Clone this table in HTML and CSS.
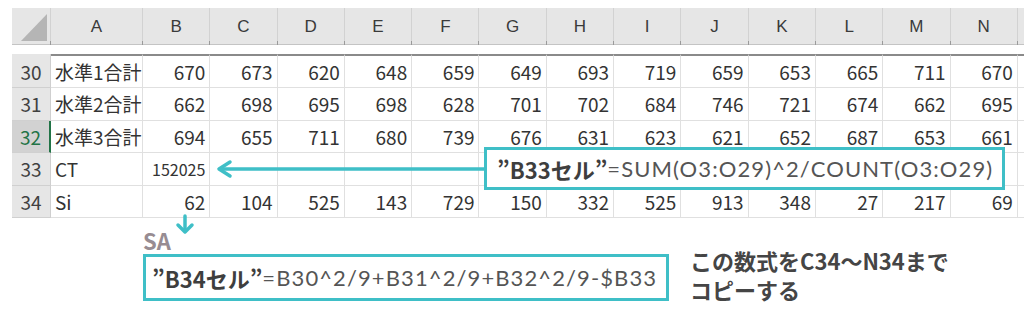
FILE: index.html
```html
<!DOCTYPE html>
<html lang="ja">
<head>
<meta charset="utf-8">
<title>Excel SA</title>
<link rel="stylesheet" href="styles.css">
</head>
<body>
<div class="page">
  <div class="sheet">
    <div class="grid head">
      <div class="hc corner"><span class="tri"></span></div>
      <div class="hc">A</div><div class="hc">B</div><div class="hc">C</div><div class="hc">D</div>
      <div class="hc">E</div><div class="hc">F</div><div class="hc">G</div><div class="hc">H</div>
      <div class="hc">I</div><div class="hc">J</div><div class="hc">K</div><div class="hc">L</div>
      <div class="hc">M</div><div class="hc">N</div><div class="hc last"></div>
    </div>
    <div class="grid body">
      <div class="rh first">30</div><div class="c t first">水準1合計</div>
      <div class="c first">670</div><div class="c first">673</div><div class="c first">620</div><div class="c first">648</div><div class="c first">659</div><div class="c first">649</div><div class="c first">693</div><div class="c first">719</div><div class="c first">659</div><div class="c first">653</div><div class="c first">665</div><div class="c first">711</div><div class="c first">670</div><div class="c e first"></div>

      <div class="rh">31</div><div class="c t">水準2合計</div>
      <div class="c">662</div><div class="c">698</div><div class="c">695</div><div class="c">698</div><div class="c">628</div><div class="c">701</div><div class="c">702</div><div class="c">684</div><div class="c">746</div><div class="c">721</div><div class="c">674</div><div class="c">662</div><div class="c">695</div><div class="c e"></div>

      <div class="rh sel">32</div><div class="c t">水準3合計</div>
      <div class="c">694</div><div class="c">655</div><div class="c">711</div><div class="c">680</div><div class="c">739</div><div class="c">676</div><div class="c">631</div><div class="c">623</div><div class="c">621</div><div class="c">652</div><div class="c">687</div><div class="c">653</div><div class="c">661</div><div class="c e"></div>

      <div class="rh">33</div><div class="c t">CT</div>
      <div class="c small">152025</div><div class="c"></div><div class="c"></div><div class="c"></div><div class="c"></div><div class="c"></div><div class="c"></div><div class="c"></div><div class="c"></div><div class="c"></div><div class="c"></div><div class="c"></div><div class="c"></div><div class="c e"></div>

      <div class="rh">34</div><div class="c t">Si</div>
      <div class="c">62</div><div class="c">104</div><div class="c">525</div><div class="c">143</div><div class="c">729</div><div class="c">150</div><div class="c">332</div><div class="c">525</div><div class="c">913</div><div class="c">348</div><div class="c">27</div><div class="c">217</div><div class="c">69</div><div class="c e"></div>
    </div>
  </div>

  <div class="notes">
    <div class="note-left">
      <div class="sa">SA</div>
      <div class="box box2"><b>”B34セル”</b><span class="f">=B30^2/9+B31^2/9+B32^2/9-$B33</span></div>
    </div>
    <div class="copy">この数式をC34〜N34まで<br>コピーする</div>
  </div>

  <div class="box box1"><b>”B33セル”</b><span class="f">=SUM(O3:O29)^2/COUNT(O3:O29)</span></div>

  <svg class="arrows" width="1024" height="309" viewBox="0 0 1024 309">
    <g fill="none" stroke="#3fbfc7" stroke-width="3.5" stroke-linecap="round" stroke-linejoin="round">
      <line x1="221" y1="169" x2="484" y2="169"/>
      <polyline points="230,162 219,169 230,176"/>
      <line x1="185" y1="216" x2="185" y2="231"/>
      <polyline points="178,225 185,232 192,225"/>
    </g>
  </svg>
</div>
</body>
</html>
```

FILE: styles.css
```css
html, body {
  margin: 0;
  padding: 0;
  background: #fff;
}
body {
  width: 1024px;
  height: 309px;
  overflow: hidden;
}
.page {
  position: relative;
  width: 1024px;
  height: 309px;
  font-family: "Noto Sans CJK JP", sans-serif;
}
.sheet {
  padding: 8px 0 0 12px;
  width: 1030px;
}
.grid {
  display: grid;
  grid-template-columns: 39px 92px repeat(13, 67.3px) 20px;
}
.head {
  grid-template-rows: 37px;
  background: #e6e6e6;
}
.hc {
  display: flex;
  align-items: center;
  justify-content: center;
  font-family: "Liberation Sans", Arial, sans-serif;
  font-size: 17px;
  color: #3a3a3a;
  border-right: 1px solid #d2d2d2;
  border-bottom: 1px solid #c4c4c4;
  box-sizing: border-box;
  padding-top: 2px;
  position: relative;
}
.hc::after {
  content: "";
  position: absolute;
  right: -1px;
  bottom: -1px;
  width: 1px;
  height: 4px;
  background: #9a9a9a;
}
.hc.last { border-right: none; }
.hc.last::after { display: none; }
.corner { position: relative; }
.tri {
  position: absolute;
  right: 3px;
  bottom: 3px;
  width: 0;
  height: 0;
  border-left: 26px solid transparent;
  border-bottom: 27px solid #b5b5b5;
}
.body {
  margin-top: 9px;
  grid-template-rows: 34px 32.5px 32.5px 32.5px 32.5px;
}
.rh {
  background: #e6e6e6;
  color: #404040;
  font-size: 19px;
  display: flex;
  align-items: center;
  justify-content: center;
  border-bottom: 1px solid #d0d0d0;
  border-right: 1px solid #cfcfcf;
  box-sizing: border-box;
}
.rh.first { padding-top: 2px; }
.rh.sel {
  background: #d2d2d2;
  color: #217346;
  border-right: 2px solid #217346;
}
.c {
  font-size: 19px;
  color: #333;
  display: flex;
  align-items: center;
  justify-content: flex-end;
  padding-right: 4px;
  border-right: 1px solid #e0e0e0;
  border-bottom: 1px solid #e0e0e0;
  box-sizing: border-box;
  white-space: nowrap;
}
.c.first { border-top: 2px solid #8a8a8a; }
.c.t {
  justify-content: flex-start;
  padding-left: 4px;
  padding-right: 0;
}
.c.small { font-size: 16px; }
.c.e { border-right: none; }

.notes {
  display: flex;
  align-items: flex-start;
  padding-left: 143px;
  margin-top: 9px;
}
.note-left {
  display: flex;
  flex-direction: column;
  align-items: flex-start;
}
.sa {
  font-size: 22px;
  font-weight: 700;
  color: #978c92;
  line-height: 26px;
  margin-bottom: 1px;
}
.box {
  border: 3px solid #3fbfc7;
  background: #fff;
  box-sizing: border-box;
  font-size: 22px;
  white-space: nowrap;
  display: flex;
  align-items: center;
}
.box b {
  color: #3e3e3e;
  font-family: "Noto Sans CJK JP", sans-serif;
  font-weight: 700;
  font-size: 22px;
}
.box .f {
  font-family: Lato, "Noto Sans CJK JP", sans-serif;
  color: #555;
  letter-spacing: 1.1px;
}
.box2 {
  width: 526px;
  height: 47px;
  padding-left: 6px;
}
.box1 {
  position: absolute;
  left: 484px;
  top: 147px;
  width: 521px;
  height: 43px;
  padding-left: 10px;
}
.copy {
  margin-left: 21px;
  margin-top: 19px;
  font-size: 22px;
  line-height: 29px;
  font-weight: 700;
  color: #454545;
  white-space: nowrap;
}
.arrows {
  position: absolute;
  left: 0;
  top: 0;
  pointer-events: none;
}
```
